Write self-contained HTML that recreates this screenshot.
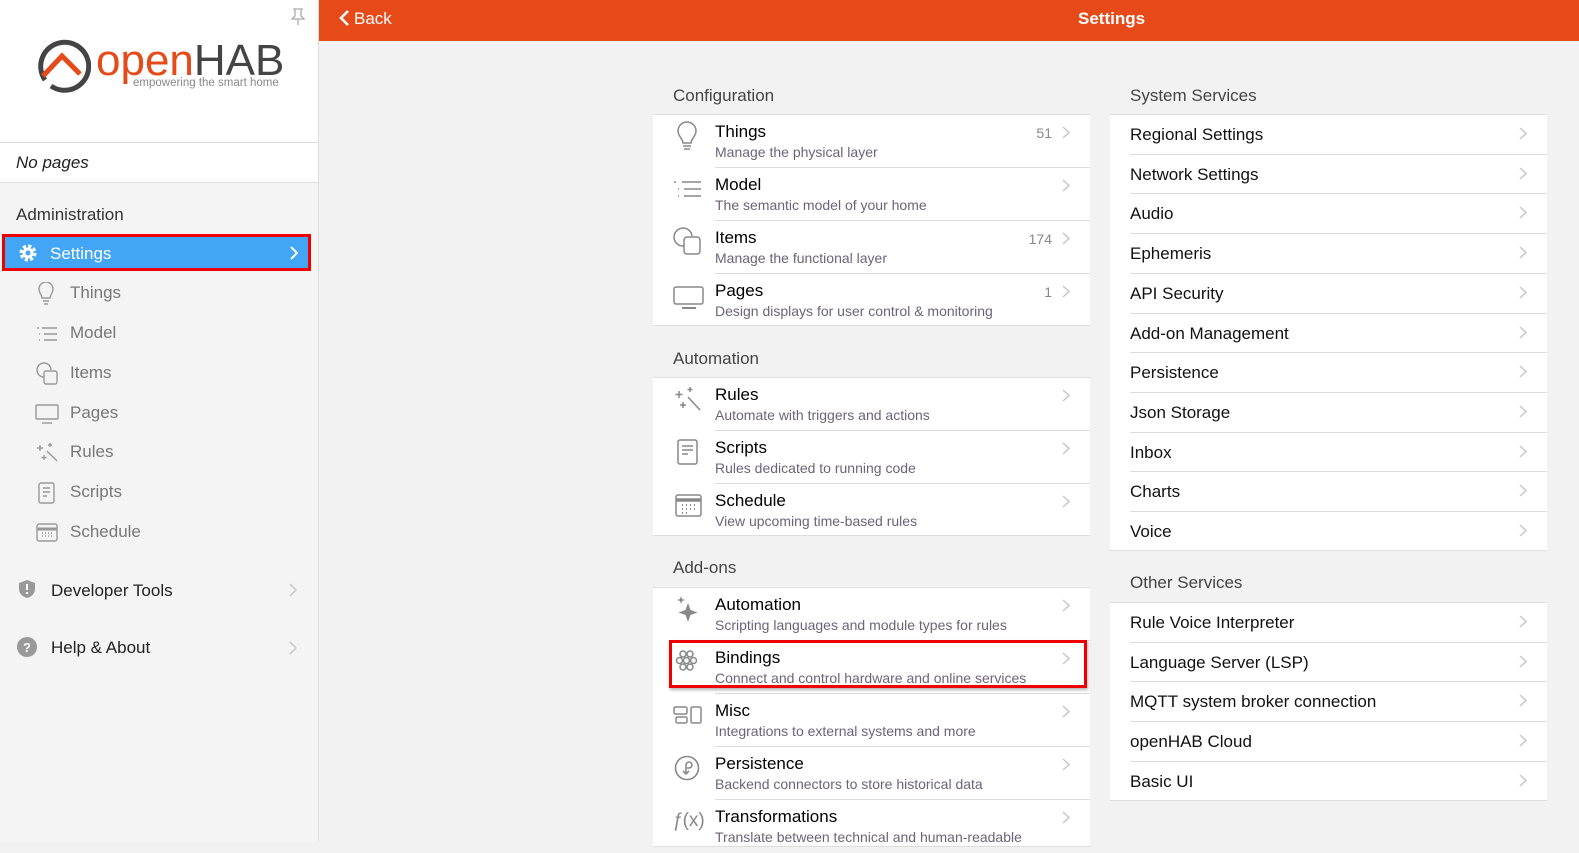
<!DOCTYPE html>
<html><head><meta charset="utf-8"><style>
*{box-sizing:border-box;margin:0;padding:0}
body{width:1579px;height:841px;overflow:hidden;background:#f2f2f2;font-family:"Liberation Sans",sans-serif;position:relative}
.abs{position:absolute}
#side{left:0;top:0;width:319px;height:841px;background:#f4f4f4;border-right:1px solid #ddd}
#top{left:0;top:0;width:318px;height:143px;background:#fff;border-bottom:1px solid #ddd}
#nop{left:0;top:143px;width:318px;height:40px;background:#fff;border-bottom:1px solid #ddd;font-style:italic;font-size:17px;color:#222;padding:10px 16px}
.sh{font-size:17px;color:#333}
.si{position:absolute;left:0;width:318px;height:40px;font-size:17px;color:#777}
.si svg{position:absolute;left:35px;top:9px}
.si span{position:absolute;left:70px;top:10px}
#bar{left:319px;top:0;width:1260px;height:41px;background:#e64a19;color:#fff}
.card{position:absolute;background:#fff;border-top:1px solid #ddd;border-bottom:1px solid #ddd}
.ttl{position:absolute;font-size:17px;color:#444}
.row{position:absolute;left:0;right:0;height:53px}
.row .ic{position:absolute;left:20px;top:6px}
.row .t{position:absolute;left:62px;top:7px;font-size:17px;color:#000}
.row .s{position:absolute;left:62px;top:29px;font-size:14px;color:#6b6478;white-space:nowrap}
.row .n{position:absolute;right:38px;top:10px;font-size:14px;color:#888}
.row .ln{position:absolute;left:62px;right:0;bottom:0;border-bottom:1px solid #ddd}
.chev{position:absolute;right:20px;top:11px}
.r2{position:absolute;left:0;right:0;height:39.8px}
.r2 span{position:absolute;left:20px;top:10px;font-size:17px;color:#111}
.r2 .ln{position:absolute;left:20px;right:0;bottom:0;border-bottom:1px solid #ddd}
.r2 .chev{top:12px}
</style></head><body>
<div id="side" class="abs"></div>
<div id="top" class="abs">
 <svg class="abs" style="left:290px;top:8px" width="16" height="18" viewBox="0 0 16 18" fill="none" stroke="#aaa" stroke-width="1.3"><path d="M3 1h10M5 1v7l-3 3h12l-3-3V1M8 11v6"/></svg>
 <svg class="abs" style="left:35px;top:38px" width="56" height="56" viewBox="0 0 56 56"><path d="M10 42 A24 24 0 1 1 16 48" fill="none" stroke="#444" stroke-width="5"/><path d="M8 38 L27 18 L45 36" fill="none" stroke="#e64a19" stroke-width="5"/></svg>
 <div class="abs" style="left:96px;top:38px;font-size:44px;line-height:46px;letter-spacing:0px"><span style="color:#e64a19">open</span><span style="color:#444">HAB</span></div>
 <div class="abs" style="left:133px;top:77px;font-size:11.5px;color:#888">empowering the smart home</div>
</div>
<div id="nop" class="abs">No pages</div>
<div class="abs sh" style="left:16px;top:205px">Administration</div>
<div class="abs" style="left:2px;top:234px;width:309px;height:37px;background:#42a5f5;border:3px solid #e00;color:#fff">
 <svg class="abs" style="left:13px;top:6px" width="20" height="20" viewBox="0 0 20 20"><circle cx="10" cy="10" r="6.5" fill="none" stroke="#fff" stroke-width="4" stroke-dasharray="3 2.1"/><circle cx="10" cy="10" r="5.5" fill="#fff"/><circle cx="10" cy="10" r="2.5" fill="#42a5f5"/></svg>
 <span class="abs" style="left:45px;top:7px;font-size:17px">Settings</span>
 <svg class="abs" style="left:284px;top:9px" width="10" height="14" viewBox="0 0 10 14" fill="none" stroke="#fff" stroke-width="2"><path d="M2 1l6 6-6 6"/></svg>
</div>
<div class="si" style="top:273px"><svg width="22" height="24" viewBox="0 0 22 24" fill="none" stroke="#999" stroke-width="1.4"><path d="M7 16c0-3-3-5-3-9a7 7 0 0 1 14 0c0 4-3 6-3 9zM8 19h6M9 22h4"/></svg><span>Things</span></div>
<div class="si" style="top:313px"><svg width="24" height="24" viewBox="0 0 24 24" fill="none" stroke="#999" stroke-width="1.4"><path d="M7 6h15M9 12h13M9 18h13M2 6h2M4 12h1M4 18h1"/></svg><span>Model</span></div>
<div class="si" style="top:353px"><svg width="24" height="24" viewBox="0 0 24 24" fill="none" stroke="#999" stroke-width="1.4"><path d="M9 15A7 7 0 1 1 16 8"/><rect x="9" y="9" width="13" height="13" rx="2"/></svg><span>Items</span></div>
<div class="si" style="top:393px"><svg width="24" height="24" viewBox="0 0 24 24" fill="none" stroke="#999" stroke-width="1.4"><rect x="1" y="3" width="22" height="14" rx="1"/><path d="M7 21h10"/></svg><span>Pages</span></div>
<div class="si" style="top:432px"><svg width="24" height="24" viewBox="0 0 24 24" fill="none" stroke="#999" stroke-width="1.4"><path d="M12 10l10 10M5 4v6M2 7h6M15 2v4M13 4h4M9 14v5M6.5 16.5h5"/></svg><span>Rules</span></div>
<div class="si" style="top:472px"><svg width="24" height="24" viewBox="0 0 24 24" fill="none" stroke="#999" stroke-width="1.4"><rect x="4" y="2" width="15" height="20" rx="2"/><path d="M8 7h7M8 11h7M8 15h4"/></svg><span>Scripts</span></div>
<div class="si" style="top:512px"><svg width="24" height="24" viewBox="0 0 24 24" fill="none" stroke="#999" stroke-width="1.4"><rect x="2" y="3" width="20" height="17" rx="2"/><path d="M2 8h20" stroke-width="3"/><path d="M7 12h1M10 12h1M13 12h1M16 12h1M7 15h1M10 15h1M13 15h1M16 15h1" stroke-width="1.6"/></svg><span>Schedule</span></div>
<svg class="abs" style="left:18px;top:579px" width="18" height="20" viewBox="0 0 18 20"><path d="M9 1L17 4v6c0 5-4 8-8 9C5 18 1 15 1 10V4z" fill="#999"/><path d="M9 5v6M9 13v2" stroke="#fff" stroke-width="2"/></svg>
<div class="abs" style="left:51px;top:581px;font-size:17px;color:#222">Developer Tools</div>
<svg class="abs" style="left:288px;top:583px" width="10" height="14" viewBox="0 0 10 14" fill="none" stroke="#c7c7cc" stroke-width="1.5"><path d="M2 1l6 6-6 6"/></svg>
<svg class="abs" style="left:17px;top:637px" width="20" height="20" viewBox="0 0 20 20"><circle cx="10" cy="10" r="10" fill="#999"/><text x="10" y="15" font-size="13" font-weight="bold" fill="#fff" text-anchor="middle" font-family="Liberation Sans">?</text></svg>
<div class="abs" style="left:51px;top:638px;font-size:17px;color:#222">Help &amp; About</div>
<svg class="abs" style="left:288px;top:641px" width="10" height="14" viewBox="0 0 10 14" fill="none" stroke="#c7c7cc" stroke-width="1.5"><path d="M2 1l6 6-6 6"/></svg>

<div id="bar" class="abs">
 <svg class="abs" style="left:20px;top:10px" width="11" height="16" viewBox="0 0 11 16" fill="none" stroke="#fff" stroke-width="2.6"><path d="M9 1L2 8l7 7"/></svg>
 <span class="abs" style="left:35px;top:9px;font-size:17px">Back</span>
 <span class="abs" style="left:759px;top:9px;font-size:17px;font-weight:bold">Settings</span>
</div>

<!-- Middle column -->
<div class="ttl" style="left:673px;top:86px">Configuration</div>
<div class="card" style="left:653px;top:114px;width:437px;height:212px">
 <div class="row" style="top:0"><svg class="ic" width="28" height="32" viewBox="0 0 28 32" fill="none" stroke="#888" stroke-width="1.5"><path d="M10 22c0-4-5-7-5-12a9 9 0 0 1 18 0c0 5-5 8-5 12zM10 25h8M11 28h6"/></svg><div class="t">Things</div><div class="s">Manage the physical layer</div><div class="n">51</div><svg class="chev" width="8" height="13" viewBox="0 0 8 13" fill="none" stroke="#c7c7cc" stroke-width="1.5"><path d="M1 1l6 5.5L1 12"/></svg><div class="ln"></div></div>
 <div class="row" style="top:53px"><svg class="ic" width="30" height="30" viewBox="0 0 30 30" fill="none" stroke="#888" stroke-width="1.5"><path d="M9 8h19M11 15h17M11 22h17M1 8h2M5 15h1M5 22h1"/></svg><div class="t">Model</div><div class="s">The semantic model of your home</div><svg class="chev" width="8" height="13" viewBox="0 0 8 13" fill="none" stroke="#c7c7cc" stroke-width="1.5"><path d="M1 1l6 5.5L1 12"/></svg><div class="ln"></div></div>
 <div class="row" style="top:106px"><svg class="ic" width="30" height="30" viewBox="0 0 30 30" fill="none" stroke="#888" stroke-width="1.5"><path d="M11 19A9 9 0 1 1 19 9"/><rect x="11" y="10" width="16" height="17" rx="3"/></svg><div class="t">Items</div><div class="s">Manage the functional layer</div><div class="n">174</div><svg class="chev" width="8" height="13" viewBox="0 0 8 13" fill="none" stroke="#c7c7cc" stroke-width="1.5"><path d="M1 1l6 5.5L1 12"/></svg><div class="ln"></div></div>
 <div class="row" style="top:159px"><svg class="ic" width="32" height="30" viewBox="0 0 32 30" fill="none" stroke="#888" stroke-width="1.5"><rect x="1" y="7" width="29" height="17" rx="2"/><path d="M9 28h14" stroke-width="2"/></svg><div class="t">Pages</div><div class="s">Design displays for user control &amp; monitoring</div><div class="n">1</div><svg class="chev" width="8" height="13" viewBox="0 0 8 13" fill="none" stroke="#c7c7cc" stroke-width="1.5"><path d="M1 1l6 5.5L1 12"/></svg></div>
</div>

<div class="ttl" style="left:673px;top:349px">Automation</div>
<div class="card" style="left:653px;top:377px;width:437px;height:159px">
 <div class="row" style="top:0"><svg class="ic" width="30" height="30" viewBox="0 0 30 30" fill="none" stroke="#888" stroke-width="1.5"><path d="M15 13l12 13M6 7v7M2.5 10.5h7M17 3v5M14.5 5.5h5M10 18v6M7 21h6"/></svg><div class="t">Rules</div><div class="s">Automate with triggers and actions</div><svg class="chev" width="8" height="13" viewBox="0 0 8 13" fill="none" stroke="#c7c7cc" stroke-width="1.5"><path d="M1 1l6 5.5L1 12"/></svg><div class="ln"></div></div>
 <div class="row" style="top:53px"><svg class="ic" width="30" height="30" viewBox="0 0 30 30" fill="none" stroke="#888" stroke-width="1.5"><rect x="5" y="3" width="19" height="24" rx="2"/><path d="M9 9h11M9 13h11M9 17h6"/></svg><div class="t">Scripts</div><div class="s">Rules dedicated to running code</div><svg class="chev" width="8" height="13" viewBox="0 0 8 13" fill="none" stroke="#c7c7cc" stroke-width="1.5"><path d="M1 1l6 5.5L1 12"/></svg><div class="ln"></div></div>
 <div class="row" style="top:106px"><svg class="ic" width="30" height="30" viewBox="0 0 30 30" fill="none" stroke="#888" stroke-width="1.5"><rect x="3" y="5" width="25" height="21" rx="2"/><path d="M3 10h25" stroke-width="3.5"/><path d="M9 15h1M13 15h1M17 15h1M21 15h1M9 19h1M13 19h1M17 19h1M21 19h1M9 23h1M13 23h1" stroke-width="2"/></svg><div class="t">Schedule</div><div class="s">View upcoming time-based rules</div><svg class="chev" width="8" height="13" viewBox="0 0 8 13" fill="none" stroke="#c7c7cc" stroke-width="1.5"><path d="M1 1l6 5.5L1 12"/></svg></div>
</div>

<div class="ttl" style="left:673px;top:558px">Add-ons</div>
<div class="card" style="left:653px;top:587px;width:437px;height:260px">
 <div class="row" style="top:0"><svg class="ic" width="30" height="30" viewBox="0 0 30 30" fill="#888"><path d="M15 9l2.5 7 7 2.5-7 2.5L15 28l-2.5-7-7-2.5 7-2.5z"/><path d="M8 2l1 3 3 1-3 1-1 3-1-3-3-1 3-1z"/></svg><div class="t">Automation</div><div class="s">Scripting languages and module types for rules</div><svg class="chev" width="8" height="13" viewBox="0 0 8 13" fill="none" stroke="#c7c7cc" stroke-width="1.5"><path d="M1 1l6 5.5L1 12"/></svg><div class="ln"></div></div>
 <div class="row" style="top:53px"><svg class="ic" width="30" height="30" viewBox="0 0 30 30" fill="none" stroke="#888" stroke-width="1.5"><circle cx="10" cy="7" r="3"/><circle cx="17" cy="7" r="3"/><circle cx="6.5" cy="13.5" r="3"/><circle cx="13.5" cy="13.5" r="3"/><circle cx="20.5" cy="13.5" r="3"/><circle cx="10" cy="20" r="3"/><circle cx="17" cy="20" r="3"/></svg><div class="t">Bindings</div><div class="s">Connect and control hardware and online services</div><svg class="chev" width="8" height="13" viewBox="0 0 8 13" fill="none" stroke="#c7c7cc" stroke-width="1.5"><path d="M1 1l6 5.5L1 12"/></svg><div class="ln"></div></div>
 <div class="row" style="top:106px"><svg class="ic" width="32" height="30" viewBox="0 0 32 30" fill="none" stroke="#888" stroke-width="1.5"><rect x="1" y="7" width="13" height="7" rx="1.5"/><rect x="3" y="17" width="11" height="6" rx="1.5"/><rect x="18" y="7" width="10" height="16" rx="1.5"/></svg><div class="t">Misc</div><div class="s">Integrations to external systems and more</div><svg class="chev" width="8" height="13" viewBox="0 0 8 13" fill="none" stroke="#c7c7cc" stroke-width="1.5"><path d="M1 1l6 5.5L1 12"/></svg><div class="ln"></div></div>
 <div class="row" style="top:159px"><svg class="ic" width="30" height="30" viewBox="0 0 30 30" fill="none" stroke="#888" stroke-width="1.6"><circle cx="14" cy="15" r="11.5"/><path d="M13 21v-9a3 3 0 1 1 3 3h-2M10 18l3 3 3-3"/></svg><div class="t">Persistence</div><div class="s">Backend connectors to store historical data</div><svg class="chev" width="8" height="13" viewBox="0 0 8 13" fill="none" stroke="#c7c7cc" stroke-width="1.5"><path d="M1 1l6 5.5L1 12"/></svg><div class="ln"></div></div>
 <div class="row" style="top:212px"><div class="ic" style="top:10px;left:19px;font-size:19px;color:#888;font-style:italic">ƒ<span style="font-style:normal">(x)</span></div><div class="t">Transformations</div><div class="s">Translate between technical and human-readable</div><svg class="chev" width="8" height="13" viewBox="0 0 8 13" fill="none" stroke="#c7c7cc" stroke-width="1.5"><path d="M1 1l6 5.5L1 12"/></svg></div>
</div>
<div class="abs" style="left:669px;top:640px;width:418px;height:48px;border:3px solid #e00;box-shadow:1px 2px 3px rgba(0,0,0,.3)"></div>

<!-- Right column -->
<div class="ttl" style="left:1130px;top:86px">System Services</div>
<div class="card" style="left:1110px;top:114px;width:437px;height:437px">
 <div class="r2" style="top:0"><span>Regional Settings</span><svg class="chev" width="8" height="13" viewBox="0 0 8 13" fill="none" stroke="#c7c7cc" stroke-width="1.5"><path d="M1 1l6 5.5L1 12"/></svg><div class="ln"></div></div>
 <div class="r2" style="top:39.7px"><span>Network Settings</span><svg class="chev" width="8" height="13" viewBox="0 0 8 13" fill="none" stroke="#c7c7cc" stroke-width="1.5"><path d="M1 1l6 5.5L1 12"/></svg><div class="ln"></div></div>
 <div class="r2" style="top:79.4px"><span>Audio</span><svg class="chev" width="8" height="13" viewBox="0 0 8 13" fill="none" stroke="#c7c7cc" stroke-width="1.5"><path d="M1 1l6 5.5L1 12"/></svg><div class="ln"></div></div>
 <div class="r2" style="top:119.1px"><span>Ephemeris</span><svg class="chev" width="8" height="13" viewBox="0 0 8 13" fill="none" stroke="#c7c7cc" stroke-width="1.5"><path d="M1 1l6 5.5L1 12"/></svg><div class="ln"></div></div>
 <div class="r2" style="top:158.8px"><span>API Security</span><svg class="chev" width="8" height="13" viewBox="0 0 8 13" fill="none" stroke="#c7c7cc" stroke-width="1.5"><path d="M1 1l6 5.5L1 12"/></svg><div class="ln"></div></div>
 <div class="r2" style="top:198.5px"><span>Add-on Management</span><svg class="chev" width="8" height="13" viewBox="0 0 8 13" fill="none" stroke="#c7c7cc" stroke-width="1.5"><path d="M1 1l6 5.5L1 12"/></svg><div class="ln"></div></div>
 <div class="r2" style="top:238.2px"><span>Persistence</span><svg class="chev" width="8" height="13" viewBox="0 0 8 13" fill="none" stroke="#c7c7cc" stroke-width="1.5"><path d="M1 1l6 5.5L1 12"/></svg><div class="ln"></div></div>
 <div class="r2" style="top:277.9px"><span>Json Storage</span><svg class="chev" width="8" height="13" viewBox="0 0 8 13" fill="none" stroke="#c7c7cc" stroke-width="1.5"><path d="M1 1l6 5.5L1 12"/></svg><div class="ln"></div></div>
 <div class="r2" style="top:317.6px"><span>Inbox</span><svg class="chev" width="8" height="13" viewBox="0 0 8 13" fill="none" stroke="#c7c7cc" stroke-width="1.5"><path d="M1 1l6 5.5L1 12"/></svg><div class="ln"></div></div>
 <div class="r2" style="top:357.3px"><span>Charts</span><svg class="chev" width="8" height="13" viewBox="0 0 8 13" fill="none" stroke="#c7c7cc" stroke-width="1.5"><path d="M1 1l6 5.5L1 12"/></svg><div class="ln"></div></div>
 <div class="r2" style="top:397px"><span>Voice</span><svg class="chev" width="8" height="13" viewBox="0 0 8 13" fill="none" stroke="#c7c7cc" stroke-width="1.5"><path d="M1 1l6 5.5L1 12"/></svg></div>
</div>

<div class="ttl" style="left:1130px;top:573px">Other Services</div>
<div class="card" style="left:1110px;top:602px;width:437px;height:199px">
 <div class="r2" style="top:0"><span>Rule Voice Interpreter</span><svg class="chev" width="8" height="13" viewBox="0 0 8 13" fill="none" stroke="#c7c7cc" stroke-width="1.5"><path d="M1 1l6 5.5L1 12"/></svg><div class="ln"></div></div>
 <div class="r2" style="top:39.7px"><span>Language Server (LSP)</span><svg class="chev" width="8" height="13" viewBox="0 0 8 13" fill="none" stroke="#c7c7cc" stroke-width="1.5"><path d="M1 1l6 5.5L1 12"/></svg><div class="ln"></div></div>
 <div class="r2" style="top:79.4px"><span>MQTT system broker connection</span><svg class="chev" width="8" height="13" viewBox="0 0 8 13" fill="none" stroke="#c7c7cc" stroke-width="1.5"><path d="M1 1l6 5.5L1 12"/></svg><div class="ln"></div></div>
 <div class="r2" style="top:119.1px"><span>openHAB Cloud</span><svg class="chev" width="8" height="13" viewBox="0 0 8 13" fill="none" stroke="#c7c7cc" stroke-width="1.5"><path d="M1 1l6 5.5L1 12"/></svg><div class="ln"></div></div>
 <div class="r2" style="top:158.8px"><span>Basic UI</span><svg class="chev" width="8" height="13" viewBox="0 0 8 13" fill="none" stroke="#c7c7cc" stroke-width="1.5"><path d="M1 1l6 5.5L1 12"/></svg></div>
</div>
</body></html>
